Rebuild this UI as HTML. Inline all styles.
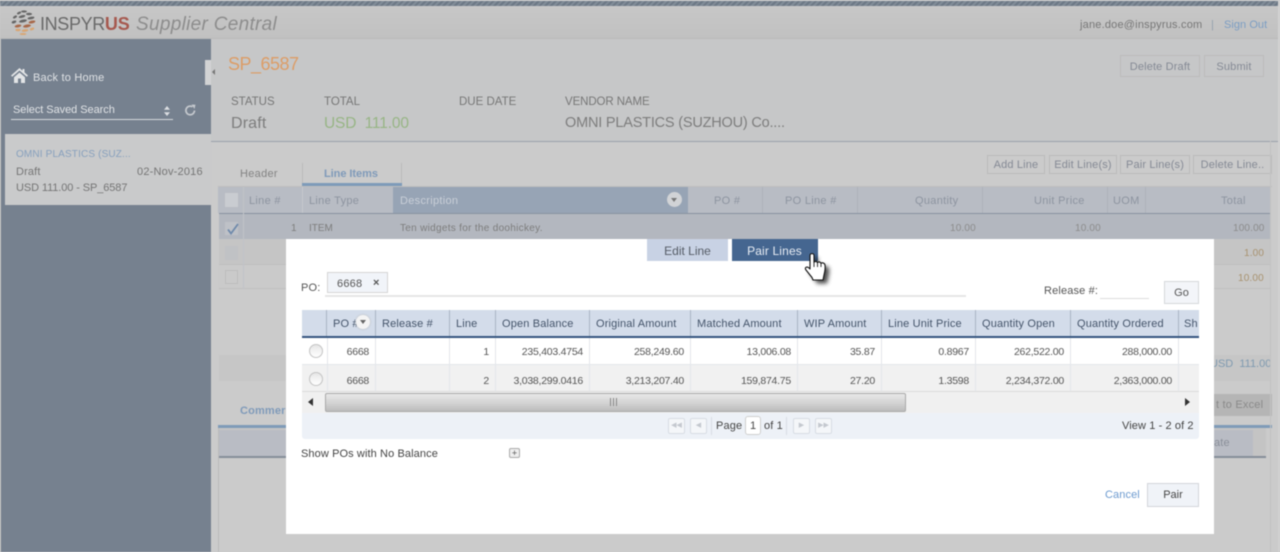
<!DOCTYPE html>
<html><head><meta charset="utf-8">
<style>
html,body{margin:0;padding:0;width:1280px;height:552px;overflow:hidden;background:#cbcbcb}
body{font-family:"Liberation Sans",sans-serif;font-size:11px;color:#555;position:relative}
#w{position:absolute;inset:0;filter:blur(.4px)}
.a,.t,.c{position:absolute}
.t{white-space:nowrap;letter-spacing:.15px}
.btn{position:absolute;box-sizing:border-box;border:1px solid #bbb;text-align:center;color:#858a95;font-size:11px;white-space:nowrap;letter-spacing:.15px}
.h{position:absolute;top:187px;height:26px;line-height:28px;color:#8d94a0;font-size:11px;white-space:nowrap;letter-spacing:.3px}
.v{position:absolute;width:1px}
.m{position:absolute;top:310px;height:27px;line-height:28px;color:#44546a;font-size:11px;white-space:nowrap;letter-spacing:.15px;box-sizing:border-box;padding-left:6px;border-right:1px solid #aab5c5;background:#d3dcea}
.r{position:absolute;height:26px;text-align:right;box-sizing:border-box;padding-right:6px;color:#555;font-size:10.5px;border-right:1px solid #e3e6ea;letter-spacing:-.25px;white-space:nowrap;overflow:hidden}
.r1{line-height:29px}
.r2{line-height:33px}
.rad{position:absolute;left:309px;width:14px;height:14px;border-radius:50%;border:1px solid #c4c4c4;background:linear-gradient(#e6e6e6,#fff);box-sizing:border-box}
.pg{position:absolute;top:418px;width:17px;height:16px;box-sizing:border-box;border:1px solid #d8dde4;border-radius:2px;background:#f4f6f9;color:#c4c8cf;font-size:7px;line-height:14px;text-align:center}
</style></head><body><div id="w">
<!-- top -->
<div class="a" style="left:0;top:0;width:1280px;height:1px;background:#cfcfcf"></div>
<div class="a" style="left:0;top:1px;width:1278px;height:5px;background:repeating-linear-gradient(135deg,#6d7986 0 2px,#808b97 2px 4px)"></div>
<div class="a" style="left:0;top:6px;width:1278px;height:33px;background:linear-gradient(#c7c7c7,#c1c1c1);border-bottom:1px solid #b9b9b9;box-sizing:border-box"></div>
<div class="a" style="left:0;top:39px;width:1278px;height:102px;background:#c6c7c8"></div>
<div class="a" style="left:211px;top:141px;width:1067px;height:1px;background:#9aa0ab"></div>
<svg class="a" style="left:10px;top:9px" width="28" height="27" viewBox="0 0 28 27">
<g fill="#666"><ellipse cx="14" cy="2.500" rx="3" ry="1.100"/><ellipse cx="9" cy="4" rx="2.200" ry="1.100" transform="rotate(-25 9 4)"/><ellipse cx="19" cy="5" rx="3" ry="1.200"/><ellipse cx="5" cy="8" rx="2.200" ry="1.200" transform="rotate(-30 5 8)"/><ellipse cx="12" cy="7.500" rx="3.500" ry="1.300" transform="rotate(-15 12 7.500)"/><ellipse cx="21" cy="9" rx="3.500" ry="1.300" transform="rotate(-10 21 9)"/><ellipse cx="4" cy="13" rx="2.400" ry="1.300" transform="rotate(-20 4 13)"/><ellipse cx="13" cy="12" rx="4" ry="1.400" transform="rotate(-12 13 12)"/></g>
<g fill="#a8694a"><ellipse cx="22" cy="13" rx="3.400" ry="1.400" transform="rotate(-12 22 13)"/><ellipse cx="8" cy="17" rx="3.400" ry="1.400" transform="rotate(-10 8 17)"/><ellipse cx="17" cy="17" rx="4" ry="1.500" transform="rotate(-10 17 17)"/></g>
<g fill="#d9a673"><ellipse cx="8" cy="21" rx="2.600" ry="1.200"/><ellipse cx="15" cy="21.500" rx="3.400" ry="1.300" transform="rotate(-8 15 21.500)"/><ellipse cx="22" cy="20" rx="2.300" ry="1.200" transform="rotate(-20 22 20)"/><ellipse cx="13" cy="25" rx="3.400" ry="1"/></g></svg>
<div class="t" style="left:40px;top:12px;font-size:18px;line-height:24px;color:#6a6a6a;letter-spacing:-.35px">INSPYR<b style="color:#a6594f;letter-spacing:-.2px">US</b></div>
<div class="t" style="left:136px;top:13px;font-size:19px;line-height:24px;color:#8d8d8d;font-style:italic;letter-spacing:.3px">Supplier Central</div>
<div class="t" style="left:1080px;top:18px;font-size:11px;line-height:14px;color:#777;letter-spacing:.2px">jane.doe@inspyrus.com</div>
<div class="t" style="left:1211px;top:18px;font-size:11px;line-height:14px;color:#93a0ad">|</div>
<div class="t" style="left:1224px;top:18px;font-size:11px;line-height:14px;color:#7b9dc3;letter-spacing:.05px">Sign Out</div>
<!-- sidebar -->
<div class="a" style="left:0;top:39px;width:211px;height:513px;background:#76818f"></div>
<div class="a" style="left:0;top:39px;width:1px;height:513px;background:#c0c0c0"></div>
<svg class="a" style="left:11px;top:68px" width="17" height="15" viewBox="0 0 17 15"><path d="M8.500 0 0 7.500 1.200 8.800 8.500 2.500 15.800 8.800 17 7.500 13.500 4.400V1H11.500V2.700ZM3 9.300V15H7V10.500H10V15H14V9.300L8.500 4.500Z" fill="#e2e4e6"/></svg>
<div class="t" style="left:33px;top:71px;font-size:11px;line-height:14px;color:#dfe2e5;letter-spacing:.2px">Back to Home</div>
<div class="t" style="left:13px;top:103px;font-size:11px;line-height:14px;color:#e0e3e6;letter-spacing:-.05px">Select Saved Search</div>
<div class="a" style="left:11px;top:119px;width:162px;height:1px;background:#d5d8dc"></div>
<svg class="a" style="left:163px;top:106px" width="8" height="10"><path d="M4 0 7 3.800H1ZM4 10 1 6.200H7Z" fill="#dcdfe3"/></svg>
<svg class="a" style="left:184px;top:104px" width="13" height="13" viewBox="0 0 13 13"><path d="M10.500 6.500A4.300 4.300 0 1 1 8.500 2.800" fill="none" stroke="#c5c9ce" stroke-width="1.700"/><path d="M7.500 .5 11.500 .8 10.500 5Z" fill="#c5c9ce"/></svg>
<div class="a" style="left:5px;top:134px;width:206px;height:71px;background:#c9cacb"></div>
<div class="t" style="left:16px;top:148px;font-size:10px;line-height:14px;color:#87a0bd;letter-spacing:.15px">OMNI PLASTICS (SUZ...</div>
<div class="t" style="left:16px;top:165px;font-size:11px;line-height:14px;color:#757575">Draft</div>
<div class="t" style="left:137px;top:165px;font-size:11px;line-height:14px;color:#757575;letter-spacing:.2px">02-Nov-2016</div>
<div class="t" style="left:16px;top:181px;font-size:11px;line-height:14px;color:#757575;letter-spacing:-.1px">USD 111.00 - SP_6587</div>
<div class="a" style="left:205px;top:60px;width:6px;height:25px;background:#d2d3d4"></div>
<div class="a" style="left:210px;top:69px;width:0;height:0;border:3px solid transparent;border-right:3px solid #777;margin-left:-1px"></div>
<!-- heading -->
<div class="t" style="left:228px;top:53px;font-size:18px;line-height:22px;color:#dc9d67;letter-spacing:-.5px">SP_6587</div>
<div class="t" style="left:231px;top:95px;font-size:11.500px;line-height:15px;color:#777;letter-spacing:0">STATUS</div>
<div class="t" style="left:324px;top:95px;font-size:11.500px;line-height:15px;color:#777;letter-spacing:0">TOTAL</div>
<div class="t" style="left:459px;top:95px;font-size:11.500px;line-height:15px;color:#777;letter-spacing:0">DUE DATE</div>
<div class="t" style="left:565px;top:95px;font-size:11.500px;line-height:15px;color:#777;letter-spacing:-.1px">VENDOR NAME</div>
<div class="t" style="left:231px;top:114px;font-size:16px;line-height:19px;color:#7d7d7d">Draft</div>
<div class="t" style="left:324px;top:114px;font-size:15.500px;line-height:19px;color:#97b585;letter-spacing:-.15px">USD&nbsp; 111.00</div>
<div class="t" style="left:565px;top:114px;font-size:14.500px;line-height:19px;color:#7d7d7d;letter-spacing:-.2px">OMNI PLASTICS (SUZHOU) Co....</div>
<div class="btn" style="left:1120px;top:55px;width:80px;height:22px;line-height:22px">Delete Draft</div>
<div class="btn" style="left:1204px;top:55px;width:60px;height:22px;line-height:22px">Submit</div>
<!-- tabs -->
<div class="t" style="left:240px;top:167px;font-size:11px;line-height:14px;color:#838383;letter-spacing:.3px">Header</div>
<div class="a" style="left:302px;top:163px;width:1px;height:22px;background:#bbb"></div>
<div class="a" style="left:401px;top:163px;width:1px;height:22px;background:#bbb"></div>
<div class="t" style="left:324px;top:167px;font-size:11px;line-height:14px;color:#7f9ab9;font-weight:bold;letter-spacing:-.05px">Line Items</div>
<div class="a" style="left:302px;top:183px;width:100px;height:3px;background:#7e9bb9"></div>
<div class="btn" style="left:987px;top:155px;width:58px;height:19px;line-height:18px">Add Line</div>
<div class="btn" style="left:1049px;top:155px;width:68px;height:19px;line-height:18px">Edit Line(s)</div>
<div class="btn" style="left:1120px;top:155px;width:70px;height:19px;line-height:18px">Pair Line(s)</div>
<div class="btn" style="left:1193px;top:155px;width:79px;height:19px;line-height:18px">Delete Line..</div>
<!-- bg table -->
<div class="a" style="left:218px;top:186px;width:1054px;height:1px;background:#bdbdbd"></div>
<div class="a" style="left:218px;top:187px;width:1052px;height:26px;background:#b8bcc4"></div>
<div class="a" style="left:393px;top:187px;width:295px;height:26px;background:#97a4b5"></div>
<div class="a" style="left:219px;top:213px;width:1051px;height:1px;background:#8892a0"></div>
<div class="a" style="left:219px;top:214px;width:1051px;height:25px;background:#b3b7bf"></div>
<div class="a" style="left:219px;top:239px;width:1051px;height:26px;background:#c5c5c5;border-bottom:1px solid #bfbfbf;box-sizing:border-box"></div>
<div class="a" style="left:219px;top:265px;width:1051px;height:24px;background:#cacaca;border-bottom:1px solid #bfbfbf;box-sizing:border-box"></div>
<div class="a" style="left:219px;top:355px;width:1051px;height:26px;background:#c6c6c6"></div>
<div class="v" style="left:243px;top:187px;height:102px;background:#c0c3c8"></div>
<div class="v" style="left:302px;top:187px;height:26px;background:#c5c8cd"></div>
<div class="v" style="left:762px;top:187px;height:26px;background:#aeb2ba"></div>
<div class="v" style="left:857px;top:187px;height:26px;background:#aeb2ba"></div>
<div class="v" style="left:982px;top:187px;height:26px;background:#aeb2ba"></div>
<div class="v" style="left:1107px;top:187px;height:26px;background:#aeb2ba"></div>
<div class="v" style="left:1145px;top:187px;height:26px;background:#aeb2ba"></div>
<div class="a" style="left:225px;top:193px;width:13px;height:14px;background:#c9ccd1"></div>
<div class="h" style="left:249px">Line #</div>
<div class="h" style="left:309px">Line Type</div>
<div class="h" style="left:400px;color:#c9cfd8;letter-spacing:.3px">Description</div>
<div class="a" style="left:667px;top:192px;width:15px;height:15px;border-radius:50%;background:#d1d3d6"></div>
<div class="a" style="left:671px;top:198px;width:0;height:0;border:3.500px solid transparent;border-top:4px solid #777"></div>
<div class="h" style="left:714px">PO #</div>
<div class="h" style="left:785px">PO Line #</div>
<div class="h" style="left:915px">Quantity</div>
<div class="h" style="left:1034px">Unit Price</div>
<div class="h" style="left:1113px">UOM</div>
<div class="h" style="left:1221px">Total</div>
<div class="a" style="left:225px;top:222px;width:13px;height:13px;background:#bec1c7"></div>
<svg class="a" style="left:226px;top:221px" width="14" height="15"><path d="M2 8.500 5 12.500 12 3" fill="none" stroke="#6f8aab" stroke-width="1.800"/></svg>
<div class="t" style="left:291px;top:222px;line-height:14px;font-size:10px;color:#7d7d7d">1</div>
<div class="t" style="left:309px;top:222px;line-height:14px;font-size:10px;color:#7d7d7d;letter-spacing:0">ITEM</div>
<div class="t" style="left:400px;top:222px;line-height:14px;font-size:10px;color:#7d7d7d;letter-spacing:.3px">Ten widgets for the doohickey.</div>
<div class="t" style="left:950px;top:222px;line-height:14px;font-size:10px;color:#8c8c8c">10.00</div>
<div class="t" style="left:1075px;top:222px;line-height:14px;font-size:10px;color:#8c8c8c">10.00</div>
<div class="t" style="left:1233px;top:222px;line-height:14px;font-size:10px;color:#8c8c8c">100.00</div>
<div class="a" style="left:225px;top:246px;width:13px;height:14px;background:#c0c2c5"></div>
<div class="a" style="left:225px;top:270px;width:13px;height:14px;border:1px solid #bdbdbd;box-sizing:border-box"></div>
<div class="t" style="left:1244px;top:247px;line-height:14px;font-size:10px;color:#a8926f">1.00</div>
<div class="t" style="left:1238px;top:272px;line-height:14px;font-size:10px;color:#a8926f">10.00</div>
<div class="t" style="left:1210px;top:357px;line-height:14px;font-size:11px;color:#7f9ab0;letter-spacing:0">USD&nbsp; 111.00</div>
<!-- comments -->
<div class="t" style="left:240px;top:404px;font-size:11px;line-height:14px;color:#7f9ab9;font-weight:bold">Commer</div>
<div class="a" style="left:218px;top:425px;width:1054px;height:3px;background:#7f9bb8"></div>
<div class="a" style="left:219px;top:428px;width:1047px;height:30px;background:#c4c4c4"></div>
<div class="a" style="left:219px;top:430px;width:1034px;height:26px;background:#b9bcc4"></div>
<div class="a" style="left:219px;top:456px;width:1047px;height:2px;background:#868e9a"></div>
<div class="a" style="left:218px;top:428px;width:1px;height:124px;background:#bbb"></div>
<div class="a" style="left:1212px;top:394px;width:60px;height:22px;background:#b5b5b5"></div>
<div class="t" style="left:1216px;top:398px;font-size:11px;line-height:14px;color:#8a8a8a;letter-spacing:.2px">t to Excel</div>
<div class="t" style="left:1214px;top:436px;font-size:11px;line-height:14px;color:#8a8f99">ate</div>
<div class="a" style="left:1278px;top:0;width:2px;height:552px;background:#d2d2d2"></div>
<div class="a" style="left:1270px;top:141px;width:1px;height:411px;background:#c2c2c2"></div>
<!-- modal -->
<div class="a" style="left:286px;top:239px;width:928px;height:295px;background:#fff"></div>
<div class="a" style="left:647px;top:239px;width:81px;height:22px;background:#c8d2e4;text-align:center;line-height:24px;font-size:12px;color:#555c66">Edit Line</div>
<div class="a" style="left:732px;top:239px;width:86px;height:22px;background:#456690;text-align:center;line-height:24px;font-size:12px;color:#e8edf4;padding-right:1px;box-sizing:border-box;letter-spacing:.15px">Pair Lines</div>
<div class="t" style="left:301px;top:281px;line-height:14px;font-size:11px;color:#555">PO:</div>
<div class="a" style="left:327px;top:272px;width:61px;height:21px;box-sizing:border-box;border:1px solid #d5d5d5;background:#f1f4f9"></div>
<div class="t" style="left:337px;top:277px;line-height:14px;font-size:11px;color:#555;letter-spacing:.2px">6668</div>
<div class="t" style="left:373px;top:276px;line-height:14px;font-size:11px;color:#555;font-weight:bold">×</div>
<div class="a" style="left:325px;top:295px;width:641px;height:2px;background:#e6e6e6"></div>
<div class="t" style="left:1044px;top:284px;line-height:14px;font-size:11px;color:#555">Release #:</div>
<div class="a" style="left:1100px;top:298px;width:49px;height:1px;background:#ddd"></div>
<div class="a" style="left:1164px;top:281px;width:35px;height:23px;box-sizing:border-box;border:1px solid #d6d8db;background:#f3f5f9;text-align:center;line-height:23px;font-size:11px;color:#555">Go</div>
<!-- modal table -->
<div class="m" style="left:302px;width:25px"></div>
<div class="m" style="left:327px;width:49px">PO #</div>
<div class="m" style="left:376px;width:74px">Release #</div>
<div class="m" style="left:450px;width:46px">Line</div>
<div class="m" style="left:496px;width:94px">Open Balance</div>
<div class="m" style="left:590px;width:101px">Original Amount</div>
<div class="m" style="left:691px;width:107px">Matched Amount</div>
<div class="m" style="left:798px;width:84px">WIP Amount</div>
<div class="m" style="left:882px;width:94px">Line Unit Price</div>
<div class="m" style="left:976px;width:95px">Quantity Open</div>
<div class="m" style="left:1071px;width:108px">Quantity Ordered</div>
<div class="m" style="left:1179px;width:20px;border-right:0;overflow:hidden;padding-left:5px">Sh</div>
<div class="a" style="left:302px;top:336px;width:897px;height:2px;background:#35557f"></div>
<div class="a" style="left:356px;top:315px;width:14px;height:14px;border-radius:50%;background:#f4f4f4;box-shadow:0 0 2px #bbb"></div>
<div class="a" style="left:359.500px;top:320px;width:0;height:0;border:3.500px solid transparent;border-top:4px solid #666"></div>
<div class="a" style="left:302px;top:365px;width:897px;height:27px;background:#f1f1f1"></div>
<div class="a" style="left:302px;top:364px;width:897px;height:1px;background:#e4e7eb"></div>
<div class="a" style="left:302px;top:391px;width:897px;height:1px;background:#dcdcdc"></div>
<div class="v" style="left:327px;top:338px;height:54px;background:#e3e6ea"></div>
<div class="rad" style="top:344px"></div><div class="rad" style="top:372px"></div>
<div class="r r1" style="left:327px;top:338px;width:49px">6668</div><div class="r r1" style="left:376px;top:338px;width:74px"></div><div class="r r1" style="left:450px;top:338px;width:46px">1</div><div class="r r1" style="left:496px;top:338px;width:94px">235,403.4754</div><div class="r r1" style="left:590px;top:338px;width:101px">258,249.60</div><div class="r r1" style="left:691px;top:338px;width:107px">13,006.08</div><div class="r r1" style="left:798px;top:338px;width:84px">35.87</div><div class="r r1" style="left:882px;top:338px;width:94px">0.8967</div><div class="r r1" style="left:976px;top:338px;width:95px">262,522.00</div><div class="r r1" style="left:1071px;top:338px;width:108px">288,000.00</div>
<div class="r r2" style="left:327px;top:365px;width:49px">6668</div><div class="r r2" style="left:376px;top:365px;width:74px"></div><div class="r r2" style="left:450px;top:365px;width:46px">2</div><div class="r r2" style="left:496px;top:365px;width:94px">3,038,299.0416</div><div class="r r2" style="left:590px;top:365px;width:101px">3,213,207.40</div><div class="r r2" style="left:691px;top:365px;width:107px">159,874.75</div><div class="r r2" style="left:798px;top:365px;width:84px">27.20</div><div class="r r2" style="left:882px;top:365px;width:94px">1.3598</div><div class="r r2" style="left:976px;top:365px;width:95px">2,234,372.00</div><div class="r r2" style="left:1071px;top:365px;width:108px">2,363,000.00</div>
<!-- scrollbar -->
<div class="a" style="left:302px;top:392px;width:897px;height:21px;background:#f0f0f0"></div>
<div class="a" style="left:325px;top:393px;width:581px;height:19px;box-sizing:border-box;border:1px solid #a9a9a9;border-radius:2px;background:linear-gradient(#e8e8e8,#d2d2d2 55%,#bcbcbc)"></div>
<div class="a" style="left:610px;top:398px;width:9px;height:8px;background:repeating-linear-gradient(90deg,#888 0 1px,transparent 1px 3px)"></div>
<div class="a" style="left:308px;top:398px;width:0;height:0;border:4px solid transparent;border-right:5px solid #333;border-left:0"></div>
<div class="a" style="left:1185px;top:398px;width:0;height:0;border:4px solid transparent;border-left:5px solid #333;border-right:0"></div>
<!-- pager -->
<div class="a" style="left:302px;top:413px;width:897px;height:26px;background:#edf1f7;border-radius:0 0 3px 3px"></div>
<div class="pg" style="left:668px">◀◀</div><div class="pg" style="left:690px">◀</div>
<div class="a" style="left:711px;top:417px;width:1px;height:18px;background:#d8dde4"></div>
<div class="t" style="left:716px;top:419px;line-height:15px;font-size:11px;color:#444">Page</div>
<div class="a" style="left:745px;top:416px;width:16px;height:19px;box-sizing:border-box;border:1px solid #cfcfcf;border-radius:3px;background:#fff;text-align:center;line-height:18px;font-size:11px;color:#444">1</div>
<div class="t" style="left:764px;top:419px;line-height:15px;font-size:11px;color:#444">of 1</div>
<div class="a" style="left:786px;top:417px;width:1px;height:18px;background:#d8dde4"></div>
<div class="pg" style="left:793px">▶</div><div class="pg" style="left:815px">▶▶</div>
<div class="t" style="left:1122px;top:419px;line-height:15px;font-size:11px;color:#444;letter-spacing:.1px">View 1 - 2 of 2</div>
<div class="t" style="left:301px;top:447px;line-height:14px;font-size:11px;color:#444;letter-spacing:.1px">Show POs with No Balance</div>
<div class="a" style="left:509px;top:448px;width:11px;height:10px;box-sizing:border-box;border:1px solid #aaa;border-radius:2px;background:#eee;text-align:center;line-height:8px;font-size:9px;color:#555">+</div>
<div class="t" style="left:1105px;top:488px;line-height:14px;font-size:11px;color:#6d9bd0;letter-spacing:.1px">Cancel</div>
<div class="a" style="left:1147px;top:483px;width:52px;height:24px;box-sizing:border-box;border:1px solid #d3d6da;background:#f0f3f8;text-align:center;line-height:23px;font-size:11px;color:#444">Pair</div>
<!-- cursor -->
<svg class="a" style="left:800px;top:250px;overflow:visible" width="34" height="36" viewBox="0 0 34 36">
<path d="M10 19V5.500C10 3 14 3 14 5.500V12.500C14.500 11 17 11 17.500 12.800C18 11.500 20.500 11.500 21 13.500C21.500 12.500 24.500 12.500 25 15C25.500 18 25 21 24 25L23 30H13L12 27.500L6 20C4 17.500 7 15.500 10 19Z" fill="#111" opacity=".75" transform="translate(4 3.500)" style="filter:blur(2.200px)"/>
<path d="M10 19V5.500C10 3 14 3 14 5.500V12.500C14.500 11 17 11 17.500 12.800C18 11.500 20.500 11.500 21 13.500C21.500 12.500 24.500 12.500 25 15C25.500 18 25 21 24 25L23 30H13L12 27.500L6 20C4 17.500 7 15.500 10 19Z" fill="#fff" stroke="#111" stroke-width="1.100" stroke-linejoin="round"/>
<path d="M14 12.500V17M17.500 12.800V17M21 13.500V17" fill="none" stroke="#222" stroke-width=".9"/></svg>
</div></body></html>
